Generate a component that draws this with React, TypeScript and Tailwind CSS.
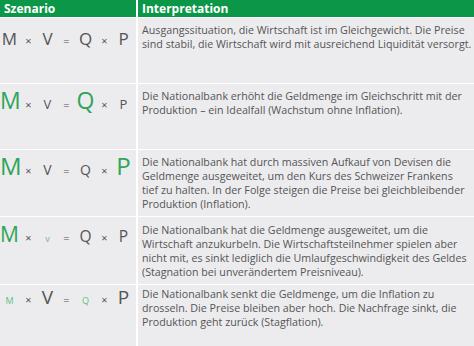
import React from "react";

type Sym = { t: string; cls: string };

const BIG = "text-[#2ea55a]";
const SMALL = "text-[#5cc08a]";
const GRAY = "text-[#555]";
const OP = "text-[11px] text-[#555]";

const rows: { h: string; pt: string; tpt: string; f: Sym[]; text: string }[] = [
  {
    h: "h-[65px]",
    pt: "pt-[12px]",
    tpt: "pt-[5px] pr-[2px]",
    f: [
      { t: "M", cls: "text-[17px] " + GRAY },
      { t: "×", cls: OP },
      { t: "V", cls: "text-[17px] " + GRAY },
      { t: "=", cls: OP },
      { t: "Q", cls: "text-[17px] " + GRAY },
      { t: "×", cls: OP },
      { t: "P", cls: "text-[17px] " + GRAY },
    ],
    text: "Ausgangssituation, die Wirtschaft ist im Gleichgewicht. Die Preise sind stabil, die Wirtschaft wird mit ausreichend Liquidität versorgt.",
  },
  {
    h: "h-[65px]",
    pt: "pt-[5px]",
    tpt: "pt-[5px] pr-[4px]",
    f: [
      { t: "M", cls: "text-[23px] " + BIG },
      { t: "×", cls: OP },
      { t: "V", cls: "text-[13px] " + GRAY },
      { t: "=", cls: OP },
      { t: "Q", cls: "text-[23px] " + BIG },
      { t: "×", cls: OP },
      { t: "P", cls: "text-[13px] " + GRAY },
    ],
    text: "Die Nationalbank erhöht die Geldmenge im Gleichschritt mit der Produktion – ein Idealfall (Wachstum ohne Inflation).",
  },
  {
    h: "h-[66px]",
    pt: "pt-[4px]",
    tpt: "pt-[5px] pr-[6px]",
    f: [
      { t: "M", cls: "text-[24px] " + BIG },
      { t: "×", cls: OP },
      { t: "V", cls: "text-[14px] " + GRAY },
      { t: "=", cls: OP },
      { t: "Q", cls: "text-[14px] " + GRAY },
      { t: "×", cls: OP },
      { t: "P", cls: "text-[24px] " + BIG },
    ],
    text: "Die Nationalbank hat durch massiven Aufkauf von Devisen die Geldmenge ausgeweitet, um den Kurs des Schweizer Frankens tief zu halten. In der Folge steigen die Preise bei gleichbleibender Produktion (Inflation).",
  },
  {
    h: "h-[67px]",
    pt: "pt-[7px]",
    tpt: "pt-[6px] pr-[4px]",
    f: [
      { t: "M", cls: "text-[21px] " + BIG },
      { t: "×", cls: OP },
      { t: "v", cls: "text-[9px] " + SMALL },
      { t: "=", cls: OP },
      { t: "Q", cls: "text-[15.5px] " + GRAY },
      { t: "×", cls: OP },
      { t: "P", cls: "text-[15.5px] " + GRAY },
    ],
    text: "Die Nationalbank hat die Geldmenge ausgeweitet, um die Wirtschaft anzukurbeln. Die Wirtschaftsteilnehmer spielen aber nicht mit, es sinkt lediglich die Umlaufgeschwindigkeit des Geldes (Stagnation bei unverändertem Preisniveau).",
  },
  {
    h: "h-[61px]",
    pt: "pt-[3px]",
    tpt: "pt-[2px] pr-[4px]",
    f: [
      { t: "M", cls: "text-[9px] " + SMALL },
      { t: "×", cls: OP },
      { t: "V", cls: "text-[19px] " + GRAY },
      { t: "=", cls: OP },
      { t: "Q", cls: "text-[9px] " + SMALL },
      { t: "×", cls: OP },
      { t: "P", cls: "text-[19px] " + GRAY },
    ],
    text: "Die Nationalbank senkt die Geldmenge, um die Inflation zu drosseln. Die Preise bleiben aber hoch. Die Nachfrage sinkt, die Produktion geht zurück (Stagflation).",
  },
];

export default function App() {
  return (
    <div className="h-[346px] w-[474px] overflow-hidden bg-white font-['Open_Sans','Noto_Sans',sans-serif]">
      <div className="grid grid-cols-[136px_1fr] gap-x-[2px] gap-y-[1px]">
        <div className="h-[17px] bg-[#0b9747] pl-1 text-[12px] leading-[17px] font-bold text-white">
          Szenario
        </div>
        <div className="h-[17px] bg-[#0b9747] pl-1 text-[12px] leading-[17px] font-bold text-white">
          Interpretation
        </div>
        {rows.map((r, i) => (
          <React.Fragment key={i}>
            <div className={"bg-[#ececee] " + r.h}>
              <div className={"flex items-baseline " + r.pt}>
                {r.f.map((s, j) => (
                  <span key={j} className={"w-[19px] shrink-0 text-center leading-none " + s.cls}>
                    {s.t}
                  </span>
                ))}
              </div>
            </div>
            <div
              className={
                "bg-[#ececee] pl-1 text-[10.7px] leading-[14px] text-[#555] " + r.h + " " + r.tpt
              }
            >
              {r.text}
            </div>
          </React.Fragment>
        ))}
      </div>
    </div>
  );
}
